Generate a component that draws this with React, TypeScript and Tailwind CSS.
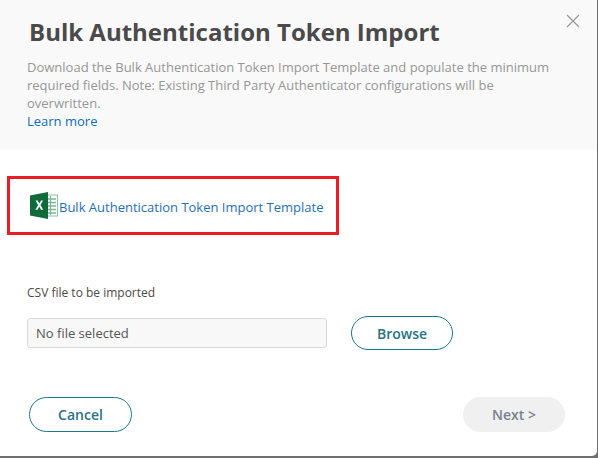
export default function App() {
  return (
    <div className="w-[598px] h-[458px] bg-[#6f6f6f] overflow-hidden font-['Open_Sans',sans-serif]">
      <div className="w-[597px] h-[456px] bg-white rounded-br-[5px] flex flex-col overflow-hidden">
        <div className="relative h-[150px] bg-[#f9f9f9] pl-6 pr-10 pt-[15px]">
          <h1 className="ml-[5px] text-[24px] leading-[34px] font-bold text-[#4a4a4a]">Bulk Authentication Token Import</h1>
          <p className="mt-[9px] ml-[3px] text-[13px] leading-[18px] text-[#979797]">
            Download the Bulk Authentication Token Import Template and populate the minimum required fields. Note: Existing Third Party Authenticator configurations will be overwritten.
            <br />
            <span className="text-[#0a6ebd]">Learn more</span>
          </p>
          <svg className="absolute left-[566px] top-[14px]" width="14" height="14" viewBox="0 0 14 14" fill="none" stroke="#999999" strokeWidth="1.2">
            <path d="M1 1L13 13M13 1L1 13" />
          </svg>
        </div>
        <div className="flex-1 flex flex-col pl-[7px]">
          <div className="mt-[26px] w-[332px] h-[59px] border-[3px] border-[#ed1c24] flex items-center pl-[20px]">
            <svg width="28" height="27" viewBox="0 0 28 27" className="shrink-0">
              <rect x="14" y="3" width="13.5" height="21" fill="#fff" stroke="#8fbfa4" strokeWidth="1" />
              <path d="M17 7h9M17 10.5h9M17 14h9M17 17.5h9M17 21h9M20.5 4v19" stroke="#7fb596" strokeWidth="1.3" />
              <path d="M0 3.5L18 0V27L0 23.5Z" fill="#0f6b3a" />
              <path d="M5.5 8.5h2.2l1.6 3L11 8.500h2.100l-2.600 4.500 2.700 4.700H11l-1.700-3.200-1.700 3.200H5.400l2.700-4.700Z" fill="#fff" />
            </svg>
            <span className="ml-[1px] mt-[5px] text-[13px] text-[#1f6fb5]">Bulk Authentication Token Import Template</span>
          </div>
          <div className="mt-[49px] ml-[20px] text-[12px] leading-[17px] text-[#4a4a4a]">CSV file to be imported</div>
          <div className="mt-[15px] ml-[20px] flex items-center">
            <div className="w-[300px] h-[30px] bg-[#f8f8f8] border border-[#d9d9d9] rounded-[3px] pl-2 pt-[2px] flex items-center text-[13px] text-[#555555]">No file selected</div>
            <button className="ml-[24px] w-[102px] h-[34px] rounded-[17px] border border-[#17798a] text-[14px] font-semibold text-[#2a7484] bg-white">Browse</button>
          </div>
          <div className="mt-[47px] ml-[22px] w-[536px] flex justify-between">
            <button className="w-[103px] h-[35px] rounded-[18px] border border-[#17798a] text-[14px] font-semibold text-[#2a7484] bg-white">Cancel</button>
            <button className="w-[102px] h-[35px] rounded-[18px] bg-[#f0f0f0] text-[14px] font-semibold text-[#7b8191]">Next &gt;</button>
          </div>
        </div>
      </div>
    </div>
  );
}
